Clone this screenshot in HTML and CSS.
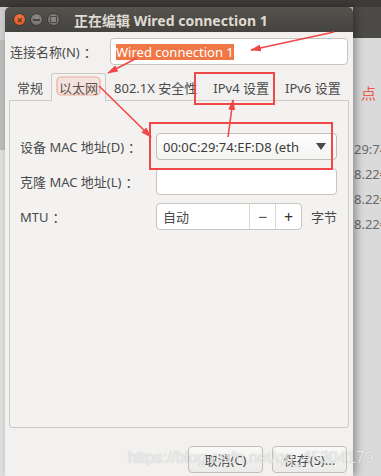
FILE: index.html
```html
<!DOCTYPE html>
<html lang="zh-CN">

<head>
  <meta charset="UTF-8">
  <meta name="viewport" content="width=device-width, initial-scale=1.0">
  <title>正在编辑 Wired connection 1</title>
  <link rel="stylesheet" href="styles.css">
</head>

<body>
  <div class="desk">
    <div class="edge-left"></div>

    <!-- 편집 창 -->
    <div class="dialog">
      <div class="titlebar">
        <span class="wbtn close">×</span>
        <span class="wbtn min"></span>
        <span class="wbtn max"></span>
        <span class="title">正在编辑 Wired connection 1</span>
      </div>

      <div class="name-row">
        <label class="name-label">连接名称(N)<span class="colon">：</span></label>
        <div class="entry name-entry"><span class="sel">Wired connection 1</span></div>
      </div>

      <div class="notebook">
        <div class="tabs">
          <span class="tab">常规</span>
          <span class="tab active">以太网</span>
          <span class="tab">802.1X 安全性</span>
          <span class="tab">IPv4 设置</span>
          <span class="tab">IPv6 设置</span>
        </div>
        <div class="panel">
          <div class="form">
            <label class="title">设备 MAC 地址(D)<span class="colon">：</span></label>
            <div class="combo">
              <span class="combo-text">00:0C:29:74:EF:D8 (eth0)</span>
              <span class="combo-arrow"></span>
            </div>

            <label class="title">克隆 MAC 地址(L)<span class="colon">：</span></label>
            <div class="entry"></div>

            <label class="title">MTU<span class="colon">：</span></label>
            <div class="mtu">
              <div class="spin">
                <span class="spin-text">自动</span>
                <span class="spin-btn">−</span>
                <span class="spin-btn">+</span>
              </div>
              <span class="unit">字节</span>
            </div>
          </div>
        </div>
      </div>

      <div class="btns">
        <button class="btn">取消(C)</button>
        <button class="btn">保存(S)...</button>
      </div>
    </div>

    <!-- 뒤쪽 창 -->
    <div class="edge-right">
      <span class="dot">点</span>
      <span class="frag first">29:74</span>
      <span class="frag">8.22€</span>
      <span class="frag">8.22€</span>
      <span class="frag">8.22€</span>
    </div>
  </div>

  <!-- 빨간 표시 -->
  <svg class="marks" width="381" height="476" viewBox="0 0 381 476">
    <defs>
      <marker id="head" markerWidth="11" markerHeight="7" refX="10" refY="3.5" orient="auto" markerUnits="userSpaceOnUse">
        <path d="M0 0 L11 3.5 L0 7 Z" fill="#f04848" />
      </marker>
    </defs>
    <rect x="57" y="77" width="43" height="18" rx="4" fill="rgba(240,120,90,0.12)" stroke="rgba(236,120,96,0.55)" stroke-width="1.2" />
    <rect x="195" y="73" width="79" height="31" fill="none" stroke="#f04848" stroke-width="2" />
    <rect x="150" y="123" width="182" height="46" fill="none" stroke="#f04848" stroke-width="2" />
    <line x1="334" y1="32" x2="251" y2="50" stroke="#f04848" stroke-width="1.6" marker-end="url(#head)" />
    <line x1="137" y1="58" x2="108" y2="73" stroke="#f04848" stroke-width="1.6" marker-end="url(#head)" />
    <line x1="99" y1="86" x2="151" y2="137" stroke="#f04848" stroke-width="1.6" marker-end="url(#head)" />
    <line x1="228" y1="137" x2="233" y2="100" stroke="#f04848" stroke-width="1.6" marker-end="url(#head)" />
  </svg>

  <div class="watermark">https://blog.csdn.net/qq_45304179</div>
</body>

</html>
```

FILE: styles.css
```css
/* 기본 */
* {
  box-sizing: border-box;
}

body {
  margin: 0;
  width: 381px;
  height: 476px;
  overflow: hidden;
  position: relative;
  font-family: "Noto Sans", "Noto Sans CJK SC", sans-serif;
  font-size: 13px;
  color: #4a4a4a;
}

.desk {
  display: flex;
  height: 476px;
  background: linear-gradient(to bottom, #3c3b37 0 7px, #d4d4d4 7px);
}

.edge-left {
  width: 5px;
  background: linear-gradient(to bottom, #3c3b37 0 7px, #cfcfcf 7px 40px, #bdbdbd 40px 150px, #e0e0e0 150px);
}

/* 창 */
.dialog {
  width: 348px;
  margin-top: 7px;
  background: #f2f1f0;
  border-radius: 5px 5px 0 0;
  box-shadow: 3px 0 9px rgba(0, 0, 0, 0.35);
  position: relative;
  z-index: 1;
}

.titlebar {
  height: 25px;
  display: flex;
  align-items: center;
  padding-left: 8px;
  gap: 4px;
  background: linear-gradient(to bottom, #55534e, #45433f);
  border-radius: 5px 5px 0 0;
}

.wbtn {
  width: 13px;
  height: 13px;
  border-radius: 50%;
  display: flex;
  align-items: center;
  justify-content: center;
  background: radial-gradient(circle at 50% 40%, #8f8d88, #6c6a66);
  border: 1px solid #3a3935;
}

.wbtn.close {
  background: radial-gradient(circle at 50% 40%, #f27a4a, #d9501f);
  color: #5a2a14;
  font-size: 10px;
  font-weight: bold;
  line-height: 1;
}

.wbtn.min::before {
  content: "";
  width: 7px;
  height: 2px;
  background: #4c4a46;
}

.wbtn.max::before {
  content: "";
  width: 5px;
  height: 5px;
  border: 1px solid #4c4a46;
}

.titlebar .title {
  margin-left: 10px;
  font-size: 14px;
  font-weight: bold;
  color: #dfdbd2;
}

/* 전각 콜론 */
.colon {
  font-family: "Noto Sans CJK TC", sans-serif;
  margin-left: 4px;
}

/* 연결 이름 */
.name-row {
  display: flex;
  align-items: center;
  padding: 6px 5px 0 5px;
}

.name-label {
  width: 100px;
}

.entry {
  height: 27px;
  background: #fff;
  border: 1px solid #c7c3bf;
  border-radius: 4px;
}

.name-entry {
  flex: 1;
  display: flex;
  align-items: center;
  padding-left: 5px;
}

.sel {
  background: #f07746;
  color: #fff;
  line-height: 16px;
}

/* 탭 */
.notebook {
  margin: 8px 4px 0 4px;
}

.tabs {
  display: flex;
  height: 27px;
}

.tab {
  padding: 0 7px;
  display: flex;
  align-items: center;
  border: 1px solid transparent;
  border-bottom: none;
}

.tab.active {
  border-color: #cdc9c5;
  border-radius: 3px 3px 0 0;
  background: #f3f2f1;
  margin-bottom: -1px;
  position: relative;
  z-index: 1;
  height: 28px;
}

.panel {
  height: 328px;
  border: 1px solid #cdc9c5;
  border-radius: 0 0 3px 3px;
  background: #f3f2f1;
  padding: 32px 0 0 10px;
}

.form {
  display: grid;
  grid-template-columns: 136px 181px;
  grid-auto-rows: 27px;
  row-gap: 8px;
  align-items: center;
}

.combo {
  height: 27px;
  display: flex;
  align-items: center;
  border: 1px solid #c2beba;
  border-radius: 4px;
  background: linear-gradient(to bottom, #fdfdfd, #f4f4f3);
  padding: 0 10px 0 6px;
}

.combo-text {
  width: 136px;
  white-space: nowrap;
  overflow: hidden;
  color: #3c3c3c;
}

.combo-arrow {
  width: 0;
  height: 0;
  margin-left: auto;
  border-left: 5px solid transparent;
  border-right: 5px solid transparent;
  border-top: 7px solid #4a4a4a;
}

.mtu {
  display: flex;
  align-items: center;
  gap: 9px;
}

.spin {
  width: 147px;
  height: 27px;
  display: flex;
  background: #fff;
  border: 1px solid #c7c3bf;
  border-radius: 4px;
}

.spin-text {
  flex: 1;
  display: flex;
  align-items: center;
  padding-left: 6px;
}

.spin-btn {
  width: 26px;
  display: flex;
  align-items: center;
  justify-content: center;
  border-left: 1px solid #dcd8d4;
  font-size: 16px;
  color: #555;
}

.spin-btn:last-child {
  color: #333;
}

.unit {
  white-space: nowrap;
}

/* 버튼 */
.btns {
  display: flex;
  justify-content: flex-end;
  gap: 9px;
  padding: 18px 6px 0 0;
}

.btn {
  width: 75px;
  height: 27px;
  font-family: inherit;
  font-size: 13px;
  color: #4a4a4a;
  border: 1px solid #c2bdb8;
  border-radius: 4px;
  background: linear-gradient(to bottom, #f9f9f8, #ebeae9);
}

/* 뒤쪽 창 조각 */
.edge-right {
  width: 28px;
  display: flex;
  flex-direction: column;
  background: linear-gradient(to bottom, #3c3b37 0 7px, #4c4b47 7px 38px, #dadada 38px);
  color: #6b6b6b;
  font-size: 13px;
  white-space: nowrap;
  overflow: hidden;
}

.dot {
  margin: 82px 0 0 8px;
  color: #ec5a4c;
  font-size: 15px;
}

.frag {
  line-height: 25px;
  padding-left: 1px;
}

.frag.first {
  margin-top: 34px;
}

/* 표시 */
.marks {
  position: absolute;
  left: 0;
  top: 0;
  z-index: 2;
}

.watermark {
  position: absolute;
  left: 128px;
  top: 449px;
  z-index: 3;
  font-family: "Liberation Sans", sans-serif;
  font-size: 16px;
  color: rgba(255, 255, 255, 0.75);
  text-shadow: 0 0 1px rgba(120, 120, 120, 0.6);
  white-space: nowrap;
}
```
